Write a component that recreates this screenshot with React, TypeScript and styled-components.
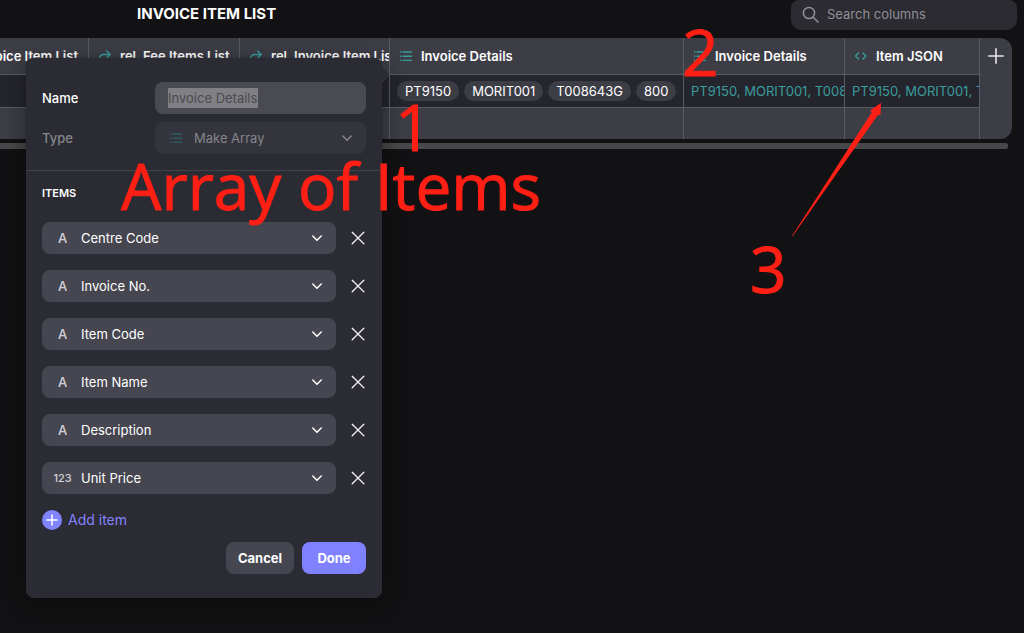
import React from "react";
import styled, { createGlobalStyle } from "styled-components";

const red = "#ff1f14";
const teal = "#3a9c9d";

const GlobalStyle = createGlobalStyle`
  * { box-sizing: border-box; }
  html, body { margin: 0; padding: 0; background: #121214; }
  body, button, input, select {
    font-family: Inter, "Liberation Sans", sans-serif;
    font-size: 13px;
    line-height: 20px;
    color: #fff;
  }
  button, input, select { border: 0; margin: 0; outline: 0; }
  button { cursor: pointer; padding: 0; }
`;

const Page = styled.main`
  position: relative;
  min-height: 100vh;
  overflow: hidden;
`;

const TopBar = styled.header`
  display: flex;
  justify-content: space-between;
  align-items: flex-start;
  height: 30px;
  padding: 0 7px 0 137px;
`;

const Title = styled.h1`
  margin: 0;
  font-size: 15px;
  font-weight: 700;
  line-height: 28px;
`;

const Search = styled.label`
  display: flex;
  align-items: center;
  gap: 8px;
  width: 226px;
  height: 30px;
  padding: 0 11px 2px;
  border-radius: 8px 8px 10px 10px;
  background: #2b2b31;
  color: #929298;
`;

const SearchInput = styled.input`
  flex: 1;
  min-width: 0;
  padding: 0;
  background: transparent;
  &::placeholder { color: #8f8f96; opacity: 1; }
`;

const TableFrame = styled.section`
  margin: 8px 12px 0 0;
  overflow: hidden;
  border-radius: 0 12px 12px 0;
  background: #3d3d46;
`;

const Table = styled.table`
  width: 100%;
  table-layout: fixed;
  border-collapse: separate;
  border-spacing: 0;
`;

const Col = styled.col<{ $w?: number }>`
  width: ${(p) => (p.$w ? `${p.$w}px` : "auto")};
`;

const Th = styled.th`
  height: 37px;
  padding: 0;
  overflow: hidden;
  border-right: 1px solid #5b5b63;
  border-bottom: 1px solid #5b5b63;
  font-weight: 600;
  text-align: left;
`;

const HeadCell = styled.div<{ $end?: boolean }>`
  display: flex;
  align-items: center;
  justify-content: ${(p) => (p.$end ? "flex-end" : "flex-start")};
  gap: 7px;
  padding: 0 10px 0 8px;
  white-space: nowrap;
  svg { flex: none; color: ${teal}; }
`;

const Td = styled.td<{ $empty?: boolean }>`
  height: ${(p) => (p.$empty ? 31 : 33)}px;
  padding: 0 0 0 7px;
  overflow: hidden;
  border-right: 1px solid #5b5b63;
  border-bottom: ${(p) => (p.$empty ? "0" : "1px solid #5b5b63")};
  background: ${(p) => (p.$empty ? "#3d3d46" : "#25252d")};
  color: ${teal};
  white-space: nowrap;
`;

const AddCell = styled.td`
  padding: 0;
  vertical-align: top;
`;

const AddColumn = styled.button`
  display: flex;
  align-items: center;
  justify-content: center;
  width: 100%;
  height: 36px;
  background: transparent;
`;

const Chips = styled.div`
  display: flex;
  gap: 5px;
`;

const Chip = styled.span`
  padding: 0 8px;
  border-radius: 10px;
  background: #3d3d46;
  color: #fff;
`;

const ScrollTrack = styled.div`
  height: 6px;
  margin: 4px 16px 0 0;
  border-radius: 0 2px 2px 0;
  background: #48484a;
`;

const Popover = styled.form`
  position: absolute;
  top: 58px;
  left: 26px;
  width: 356px;
  padding: 24px 0;
  border-radius: 8px;
  background: #2b2b33;
  box-shadow: 0 0 1px #1c1c21, 0 6px 24px #0006;
`;

const PopoverTip = styled.svg`
  position: absolute;
  top: 8px;
  left: 356px;
`;

const Fields = styled.div`
  display: flex;
  flex-direction: column;
  gap: 8px;
  padding: 0 16px 16px;
  border-bottom: 1px solid #42424a;
`;

const Field = styled.div`
  display: flex;
  align-items: center;
  justify-content: space-between;
`;

const Label = styled.label<{ $muted?: boolean }>`
  font-weight: 500;
  color: ${(p) => (p.$muted ? "#85858b" : "#fff")};
`;

const NameBox = styled.div`
  display: flex;
  align-items: center;
  width: 211px;
  height: 32px;
  padding: 0 13px;
  border-radius: 8px;
  background: #4a4a53;
`;

const NameInput = styled.input`
  width: 90px;
  padding: 0;
  background: #808084;
  color: #4a4a50;
`;

const SelectBox = styled.div<{ $muted?: boolean }>`
  position: relative;
  display: flex;
  align-items: center;
  flex: ${(p) => (p.$muted ? "0 0 211px" : "1")};
  height: 32px;
  border-radius: 8px;
  background: ${(p) => (p.$muted ? "#34343d" : "#464650")};
  color: ${(p) => (p.$muted ? "#85858b" : "#fff")};
`;

const Select = styled.select`
  width: 100%;
  height: 32px;
  padding: 0 36px 0 39px;
  appearance: none;
  border-radius: 8px;
  background: transparent;
  color: inherit;
  opacity: 1;
`;

const Leading = styled.span<{ $small?: boolean }>`
  position: absolute;
  left: 8px;
  display: flex;
  justify-content: center;
  width: 25px;
  color: #d3d3d9;
  font-size: ${(p) => (p.$small ? 11 : 13)}px;
  font-weight: 500;
  pointer-events: none;
`;

const Chevron = styled.svg`
  position: absolute;
  right: 13px;
  pointer-events: none;
`;

const Items = styled.fieldset`
  display: flex;
  flex-direction: column;
  gap: 16px;
  min-width: 0;
  margin: 0;
  padding: 12px 16px 0;
  border: 0;
`;

const ItemsTitle = styled.h2`
  margin: 0 0 3px;
  font-size: 11px;
  font-weight: 600;
  line-height: 20px;
`;

const ItemRow = styled.div`
  display: flex;
  align-items: center;
  gap: 14px;
`;

const RemoveButton = styled.button`
  display: flex;
  align-items: center;
  justify-content: center;
  width: 16px;
  height: 32px;
  background: transparent;
`;

const AddItem = styled.button`
  display: flex;
  align-items: center;
  gap: 6px;
  margin: 16px 16px 12px;
  background: transparent;
  color: #8483ff;
  font-size: 14px;
`;

const Actions = styled.div`
  display: flex;
  justify-content: flex-end;
  gap: 8px;
  padding: 0 16px;
`;

const ActionButton = styled.button<{ $primary?: boolean }>`
  width: ${(p) => (p.$primary ? 64 : 68)}px;
  height: 32px;
  border-radius: 8px;
  background: ${(p) => (p.$primary ? "#7f81ff" : "#464650")};
  font-weight: 700;
`;

const Note = styled.span<{ $x: number; $y: number }>`
  position: absolute;
  left: ${(p) => p.$x}px;
  top: ${(p) => p.$y}px;
  color: ${red};
  font-family: "Open Sans", "Noto Sans", sans-serif;
  font-size: 64px;
  -webkit-text-stroke: 1px ${red};
  line-height: 80px;
  white-space: nowrap;
  pointer-events: none;
`;

const NoteArrow = styled.svg`
  position: absolute;
  left: 790px;
  top: 100px;
  pointer-events: none;
`;

const ListIcon = ({ color = teal }: { color?: string }) => (
  <svg width="16" height="16" viewBox="0 0 16 16" fill="none" stroke={color} strokeWidth="1.4" aria-hidden>
    <path d="M4.5 4H14M4.5 8.2H14M4.5 12.4H14M2 4H3.4M2 8.2H3.4M2 12.4H3.4" />
  </svg>
);

const RelationIcon = () => (
  <svg width="16" height="16" viewBox="0 0 16 16" fill="none" stroke="currentColor" strokeWidth="1.4" strokeLinecap="round" strokeLinejoin="round" aria-hidden>
    <path d="M2.5 12.5V11C2.5 8.2 4 6.5 7 6.5H13M9.7 3L13.2 6.5L9.7 10" />
  </svg>
);

const CodeIcon = () => (
  <svg width="16" height="16" viewBox="0 0 16 16" fill="none" stroke="currentColor" strokeWidth="1.4" strokeLinecap="round" strokeLinejoin="round" aria-hidden>
    <path d="M5.5 5L2.5 8L5.5 11M10 5L13 8L10 11" />
  </svg>
);

const Down = () => (
  <Chevron width="12" height="12" viewBox="0 0 12 12" fill="none" stroke="currentColor" strokeWidth="1.5" strokeLinecap="round" strokeLinejoin="round" aria-hidden>
    <path d="M1.8 4L6 8.2L10.2 4" />
  </Chevron>
);

const headers = [
  { text: "rel. Invoice Item List", icon: <RelationIcon />, end: true },
  { text: "rel. Fee Items List", icon: <RelationIcon /> },
  { text: "rel. Invoice Item List", icon: <RelationIcon /> },
  { text: "Invoice Details", icon: <ListIcon /> },
  { text: "Invoice Details", icon: <ListIcon /> },
  { text: "Item JSON", icon: <CodeIcon /> },
];

const chips = ["PT9150", "MORIT001", "T008643G", "800"];
const joined = "PT9150, MORIT001, T008643G, 800";

const items = ["Centre Code", "Invoice No.", "Item Code", "Item Name", "Description", "Unit Price"];

export default function App() {
  return (
    <Page>
      <GlobalStyle />
      <TopBar>
        <Title>INVOICE ITEM LIST</Title>
        <Search>
          <svg width="17" height="17" viewBox="0 0 17 17" fill="none" stroke="currentColor" strokeWidth="1.5" strokeLinecap="round" aria-hidden>
            <circle cx="7" cy="7" r="5.6" />
            <path d="M11.2 11.2L16 16" />
          </svg>
          <SearchInput type="text" placeholder="Search columns" aria-label="Search columns" />
        </Search>
      </TopBar>

      <TableFrame>
        <Table>
          <colgroup>
            <Col />
            <Col $w={151} />
            <Col $w={150} />
            <Col $w={294} />
            <Col $w={161} />
            <Col $w={135} />
            <Col $w={32} />
          </colgroup>
          <tbody>
            <tr>
              {headers.map((h, i) => (
                <Th key={i} scope="col">
                  <HeadCell $end={h.end}>
                    {h.icon}
                    <span>{h.text}</span>
                  </HeadCell>
                </Th>
              ))}
              <AddCell rowSpan={3}>
                <AddColumn type="button" aria-label="Add column">
                  <svg width="16" height="16" viewBox="0 0 16 16" stroke="#e6e6ea" strokeWidth="1.6" strokeLinecap="round" aria-hidden>
                    <path d="M8 .8V15.2M.8 8H15.2" />
                  </svg>
                </AddColumn>
              </AddCell>
            </tr>
            <tr>
              <Td />
              <Td />
              <Td />
              <Td>
                <Chips>
                  {chips.map((c) => (
                    <Chip key={c}>{c}</Chip>
                  ))}
                </Chips>
              </Td>
              <Td>{joined}</Td>
              <Td>{joined}</Td>
            </tr>
            <tr>
              {headers.map((_, i) => (
                <Td key={i} $empty />
              ))}
            </tr>
          </tbody>
        </Table>
      </TableFrame>
      <ScrollTrack />

      <Popover onSubmit={(e) => e.preventDefault()}>
        <PopoverTip width="8" height="16" viewBox="0 0 8 16" aria-hidden>
          <path d="M0 0L7.5 8L0 16Z" fill="#2b2b33" />
          <path d="M0 0L7.5 8L0 16" fill="none" stroke="#4a4a52" strokeWidth=".6" />
        </PopoverTip>
        <Fields>
          <Field>
            <Label htmlFor="name">Name</Label>
            <NameBox>
              <NameInput id="name" type="text" defaultValue="Invoice Details" />
            </NameBox>
          </Field>
          <Field>
            <Label htmlFor="type" $muted>Type</Label>
            <SelectBox $muted>
              <Leading>
                <ListIcon color="#285d62" />
              </Leading>
              <Select id="type" disabled>
                <option>Make Array</option>
              </Select>
              <Down />
            </SelectBox>
          </Field>
        </Fields>
        <Items>
          <ItemsTitle>ITEMS</ItemsTitle>
          {items.map((item) => {
            const numeric = item === "Unit Price";
            return (
              <ItemRow key={item}>
                <SelectBox>
                  <Leading $small={numeric}>{numeric ? "123" : "A"}</Leading>
                  <Select aria-label={`Column ${item}`}>
                    <option>{item}</option>
                  </Select>
                  <Down />
                </SelectBox>
                <RemoveButton type="button" aria-label={`Remove ${item}`}>
                  <svg width="14" height="14" viewBox="0 0 14 14" stroke="#f0f0f3" strokeWidth="1.3" strokeLinecap="round" aria-hidden>
                    <path d="M1.2 1.2L12.8 12.8M12.8 1.2L1.2 12.8" />
                  </svg>
                </RemoveButton>
              </ItemRow>
            );
          })}
        </Items>
        <AddItem type="button">
          <svg width="20" height="20" viewBox="0 0 20 20" aria-hidden>
            <circle cx="10" cy="10" r="10" fill="#8183ff" />
            <path d="M10 5V15M5 10H15" stroke="#fff" strokeWidth="1.5" strokeLinecap="round" />
          </svg>
          Add item
        </AddItem>
        <Actions>
          <ActionButton type="button">Cancel</ActionButton>
          <ActionButton type="submit" $primary>Done</ActionButton>
        </Actions>
      </Popover>

      <Note $x={121} $y={146}>Array of Items</Note>
      <Note $x={395} $y={87}>1</Note>
      <Note $x={682} $y={12}>2</Note>
      <Note $x={750} $y={229}>3</Note>
      <NoteArrow width="94" height="138" viewBox="0 0 94 138" aria-hidden>
        <path d="M2 136L82 12L80 10.5L91 3L90.5 14.5L87.5 15.5L2.6 136.2Z" fill={red} />
      </NoteArrow>
    </Page>
  );
}
